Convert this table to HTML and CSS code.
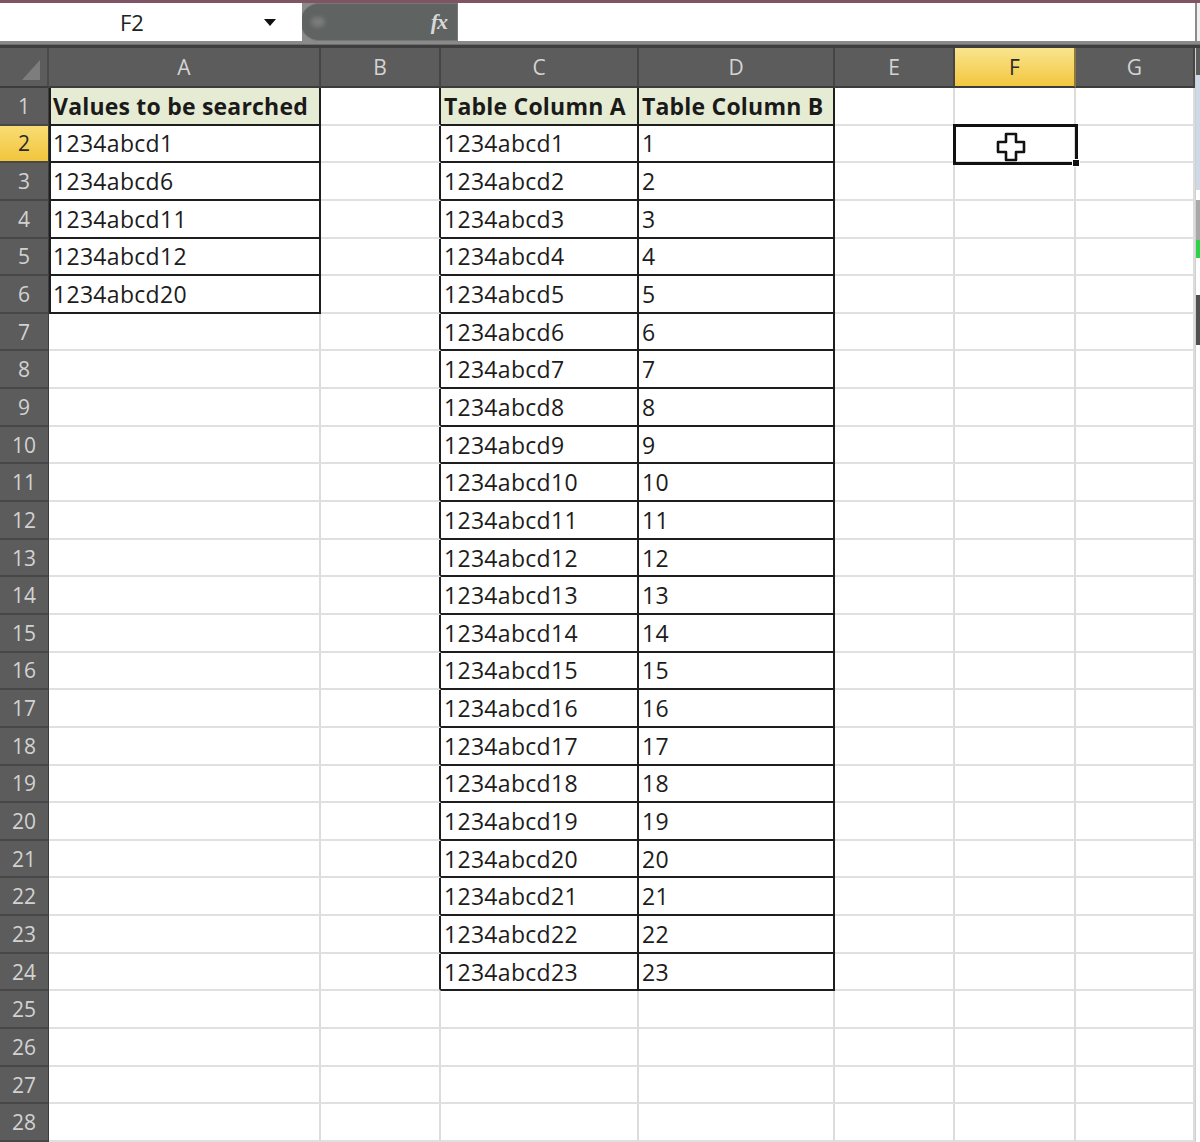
FILE: index.html
```html
<!DOCTYPE html>
<html>
<head>
<meta charset="utf-8">
<link rel="stylesheet" href="styles.css">
</head>
<body>
<div class="app">
  <div class="topbar">
    <div class="namebox"><span class="nb-text">F2</span><span class="nb-arrow"></span></div>
    <div class="fxpill"><span class="fx-blob"></span><span class="fx">fx</span></div>
    <div class="formula"></div>
    <div class="tb-edge"></div>
  </div>
  <div class="sep"></div>
  <div class="main">
    <div class="sheet">
      <div class="corner"><svg width="48" height="40" viewBox="0 0 48 40"><polygon points="22,32 40,12 40,32" fill="#7d7d7d"/></svg></div>
      <div class="ch">A</div><div class="ch">B</div><div class="ch">C</div><div class="ch">D</div><div class="ch">E</div><div class="ch ch-sel">F</div><div class="ch">G</div>

      <div class="rh">1</div><div class="c t ta th">Values to be searched</div><div class="c tb"></div><div class="c t th">Table Column A</div><div class="c t th">Table Column B</div><div class="c"></div><div class="c"></div><div class="c"></div>
      <div class="rh rh-sel">2</div><div class="c t ta">1234abcd1</div><div class="c tb"></div><div class="c t">1234abcd1</div><div class="c t">1</div><div class="c"></div><div class="c sel"><svg class="cursor" width="30" height="30" viewBox="0 0 30 30"><polygon points="10,2 20,2 20,10 28,10 28,20 20,20 20,28 10,28 10,20 2,20 2,10 10,10" fill="#fff" stroke="#111" stroke-width="2.6" stroke-linejoin="round"/></svg><span class="handle"></span></div><div class="c"></div>
      <div class="rh">3</div><div class="c t ta">1234abcd6</div><div class="c tb"></div><div class="c t">1234abcd2</div><div class="c t">2</div><div class="c"></div><div class="c"></div><div class="c"></div>
      <div class="rh">4</div><div class="c t ta">1234abcd11</div><div class="c tb"></div><div class="c t">1234abcd3</div><div class="c t">3</div><div class="c"></div><div class="c"></div><div class="c"></div>
      <div class="rh">5</div><div class="c t ta">1234abcd12</div><div class="c tb"></div><div class="c t">1234abcd4</div><div class="c t">4</div><div class="c"></div><div class="c"></div><div class="c"></div>
      <div class="rh">6</div><div class="c t ta">1234abcd20</div><div class="c tb"></div><div class="c t">1234abcd5</div><div class="c t">5</div><div class="c"></div><div class="c"></div><div class="c"></div>
      <div class="rh">7</div><div class="c"></div><div class="c tb"></div><div class="c t">1234abcd6</div><div class="c t">6</div><div class="c"></div><div class="c"></div><div class="c"></div>
      <div class="rh">8</div><div class="c"></div><div class="c tb"></div><div class="c t">1234abcd7</div><div class="c t">7</div><div class="c"></div><div class="c"></div><div class="c"></div>
      <div class="rh">9</div><div class="c"></div><div class="c tb"></div><div class="c t">1234abcd8</div><div class="c t">8</div><div class="c"></div><div class="c"></div><div class="c"></div>
      <div class="rh">10</div><div class="c"></div><div class="c tb"></div><div class="c t">1234abcd9</div><div class="c t">9</div><div class="c"></div><div class="c"></div><div class="c"></div>
      <div class="rh">11</div><div class="c"></div><div class="c tb"></div><div class="c t">1234abcd10</div><div class="c t">10</div><div class="c"></div><div class="c"></div><div class="c"></div>
      <div class="rh">12</div><div class="c"></div><div class="c tb"></div><div class="c t">1234abcd11</div><div class="c t">11</div><div class="c"></div><div class="c"></div><div class="c"></div>
      <div class="rh">13</div><div class="c"></div><div class="c tb"></div><div class="c t">1234abcd12</div><div class="c t">12</div><div class="c"></div><div class="c"></div><div class="c"></div>
      <div class="rh">14</div><div class="c"></div><div class="c tb"></div><div class="c t">1234abcd13</div><div class="c t">13</div><div class="c"></div><div class="c"></div><div class="c"></div>
      <div class="rh">15</div><div class="c"></div><div class="c tb"></div><div class="c t">1234abcd14</div><div class="c t">14</div><div class="c"></div><div class="c"></div><div class="c"></div>
      <div class="rh">16</div><div class="c"></div><div class="c tb"></div><div class="c t">1234abcd15</div><div class="c t">15</div><div class="c"></div><div class="c"></div><div class="c"></div>
      <div class="rh">17</div><div class="c"></div><div class="c tb"></div><div class="c t">1234abcd16</div><div class="c t">16</div><div class="c"></div><div class="c"></div><div class="c"></div>
      <div class="rh">18</div><div class="c"></div><div class="c tb"></div><div class="c t">1234abcd17</div><div class="c t">17</div><div class="c"></div><div class="c"></div><div class="c"></div>
      <div class="rh">19</div><div class="c"></div><div class="c tb"></div><div class="c t">1234abcd18</div><div class="c t">18</div><div class="c"></div><div class="c"></div><div class="c"></div>
      <div class="rh">20</div><div class="c"></div><div class="c tb"></div><div class="c t">1234abcd19</div><div class="c t">19</div><div class="c"></div><div class="c"></div><div class="c"></div>
      <div class="rh">21</div><div class="c"></div><div class="c tb"></div><div class="c t">1234abcd20</div><div class="c t">20</div><div class="c"></div><div class="c"></div><div class="c"></div>
      <div class="rh">22</div><div class="c"></div><div class="c tb"></div><div class="c t">1234abcd21</div><div class="c t">21</div><div class="c"></div><div class="c"></div><div class="c"></div>
      <div class="rh">23</div><div class="c"></div><div class="c tb"></div><div class="c t">1234abcd22</div><div class="c t">22</div><div class="c"></div><div class="c"></div><div class="c"></div>
      <div class="rh">24</div><div class="c"></div><div class="c tb"></div><div class="c t">1234abcd23</div><div class="c t">23</div><div class="c"></div><div class="c"></div><div class="c"></div>
      <div class="rh">25</div><div class="c"></div><div class="c"></div><div class="c"></div><div class="c"></div><div class="c"></div><div class="c"></div><div class="c"></div>
      <div class="rh">26</div><div class="c"></div><div class="c"></div><div class="c"></div><div class="c"></div><div class="c"></div><div class="c"></div><div class="c"></div>
      <div class="rh">27</div><div class="c"></div><div class="c"></div><div class="c"></div><div class="c"></div><div class="c"></div><div class="c"></div><div class="c"></div>
      <div class="rh">28</div><div class="c"></div><div class="c"></div><div class="c"></div><div class="c"></div><div class="c"></div><div class="c"></div><div class="c"></div>
    </div>
    <div class="strip">
      <div class="s-gray"></div>
      <div class="s-blue"></div>
      <div class="s-white"></div>
      <div class="s-lgray"></div>
      <div class="s-green"></div>
      <div class="s-white2"></div>
      <div class="s-dark"></div>
      <div class="s-rest"></div>
    </div>
  </div>
</div>
</body>
</html>
```

FILE: styles.css
```css
* { box-sizing: border-box; }
html, body { margin: 0; padding: 0; }
body {
  width: 1200px;
  height: 1142px;
  overflow: hidden;
  background: #ffffff;
  font-family: "Open Sans", "Liberation Sans", sans-serif;
}
.app { display: flex; flex-direction: column; width: 1200px; height: 1142px; }

.topbar {
  height: 44px;
  display: flex;
  border-top: 3px solid #7f5465;
  background: #8a8a8a;
  padding-bottom: 3px;
}
.namebox {
  width: 302px;
  background: #fff;
  display: flex;
  align-items: center;
  position: relative;
}
.nb-text {
  margin-left: 120px;
  font-size: 22px;
  color: #222;
}
.nb-arrow {
  margin-left: 120px;
  width: 0; height: 0;
  border-left: 6px solid transparent;
  border-right: 6px solid transparent;
  border-top: 7px solid #111;
}
.fxpill {
  width: 158px;
  background: #5f6361;
  border-radius: 22px 0 0 22px;
  margin-left: -2px;
  border: 1px solid #777;
  display: flex;
  align-items: center;
  justify-content: space-between;
  padding: 0 10px 0 10px;
}
.fx-blob {
  width: 14px; height: 10px;
  border-radius: 5px;
  background: #7a7c7b;
  filter: blur(2px);
}
.fx {
  font-family: "Liberation Serif", serif;
  font-style: italic;
  font-weight: bold;
  font-size: 22px;
  color: #d8d8d8;
  letter-spacing: -1px;
}
.formula {
  flex: 1;
  background: #fff;
  border-right: 2px solid #8c8c8c;
}
.tb-edge { width: 3px; background: #f0f0f0; }

.sep { height: 4px; background: #3e3e3e; border-top: 1px solid #6e6e6e; }

.main { flex: 1; display: flex; }
.sheet {
  width: 1195px;
  display: grid;
  grid-template-columns: 49px 272px 120px 198px 196px 120px 121px 119px;
  grid-template-rows: 40px repeat(28, 1fr);
}
.corner {
  background: #5c5c5c;
  border-right: 2px solid #4a4a4a;
  border-bottom: 2px solid #3c3c3c;
}
.corner svg { display: block; }
.ch {
  background: #5c5c5c;
  color: #d4d4d4;
  font-size: 21px;
  display: flex;
  align-items: center;
  justify-content: center;
  border-right: 2px solid #454545;
  border-bottom: 2px solid #3c3c3c;
}
.ch-sel {
  background: linear-gradient(#f9e48e, #f3c73e);
  color: #2a2a2a;
  border-right-color: #8c7a3a;
}
.rh {
  background: #5c5c5c;
  color: #d2d2d2;
  font-size: 21px;
  display: flex;
  align-items: center;
  justify-content: center;
  border-bottom: 2px solid #474747;
  border-right: 1px solid #3c3c3c;
}
.rh-sel {
  background: linear-gradient(#f8dc74, #f2c63c);
  color: #2a2a2a;
}
.c {
  background: #fff;
  border-right: 2px solid #dcdcdc;
  border-bottom: 2px solid #e0e0e0;
  font-size: 23px;
  letter-spacing: 0.3px;
  color: #1c1c1c;
  display: flex;
  align-items: center;
  padding-left: 3px;
  white-space: nowrap;
  overflow: visible;
}
.c.t {
  border-right: 2px solid #1e1e1e;
  border-bottom: 2px solid #1e1e1e;
}
.c.ta { border-left: 2px solid #1e1e1e; padding-left: 2px; }
.c.tb { border-right: 2px solid #1e1e1e; }
.c.th {
  background: #e6ebd3;
  font-weight: bold;
  color: #1a1a1a;
  letter-spacing: 0.2px;
}
.c.sel {
  position: relative;
  outline: 3px solid #111;
  outline-offset: -1px;
  z-index: 2;
}
.cursor {
  position: absolute;
  left: 41px;
  top: 6px;
}
.handle {
  position: absolute;
  right: -6px;
  bottom: -6px;
  width: 8px;
  height: 8px;
  background: #111;
  border: 1px solid #fff;
}

.strip { width: 5px; display: flex; flex-direction: column; background: #fff; border-left: 1px solid #d0d0d0; }
.s-gray { height: 27px; background: #5c5c5c; }
.s-blue { height: 115px; background: #cdd9e6; }
.s-white { height: 10px; background: #fff; }
.s-lgray { height: 40px; background: #a8a8a8; }
.s-green { height: 18px; background: #2bd24a; }
.s-white2 { height: 37px; background: #fff; }
.s-dark { height: 50px; background: #505050; }
.s-rest { flex: 1; background: #fff; }
```
